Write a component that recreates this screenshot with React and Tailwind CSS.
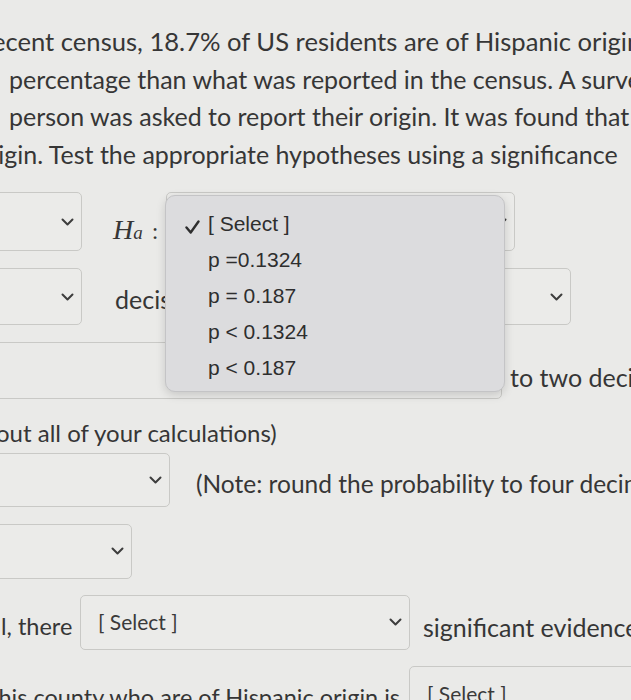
import React from 'react'

const Chevron = ({ className = '' }) => (
  <svg className={className} width="13" height="8" viewBox="0 0 13 8" fill="none">
    <path d="M1.5 1.5l5 5 5-5" stroke="#3d3d3d" strokeWidth="2" strokeLinecap="round" strokeLinejoin="round" />
  </svg>
)

const Box = ({ className = '', children, chevron = true }) => (
  <div className={`flex items-center border border-[#c9c9c6] rounded-[5px] bg-[#ebebe9] shrink-0 ${className}`}>
    <div className="flex-1 pl-[17px] text-[#3a3a3a] text-[21px]">{children}</div>
    {chevron && <Chevron className="mr-[7px]" />}
  </div>
)

const options = ['[ Select ]', 'p =0.1324', 'p = 0.187', 'p < 0.1324', 'p < 0.187']

export default function App() {
  return (
    <div className="relative w-[631px] h-[700px] overflow-hidden bg-[#eaeae8] text-[#363636] text-[25px] font-['Lato','Noto_Sans',sans-serif]">
      {/* question text */}
      <div className="pt-[23px] leading-[37.5px] whitespace-nowrap">
        <div className="ml-[-8px] text-[25.6px]">ecent census, 18.7% of US residents are of Hispanic origin</div>
        <div className="ml-[9px]">percentage than what was reported in the census. A survey</div>
        <div className="ml-[9px]">person was asked to report their origin. It was found that</div>
        <div className="ml-[-25px]">origin. Test the appropriate hypotheses using a significance</div>
      </div>

      {/* Ha row */}
      <div className="mt-[19px] h-[59px] flex items-center">
        <Box className="ml-[-40px] w-[122px] h-full" />
        <div className="ml-[31px] flex items-baseline mt-[16px] font-['Liberation_Serif',serif]">
          <span className="italic text-[28px]">H</span>
          <span className="italic text-[19px] mt-[9px]">a</span>
          <span className="ml-[9px] text-[24px]">:</span>
        </div>
        <Box className="ml-[8px] w-[349px] h-full" />
      </div>

      {/* decision row */}
      <div className="mt-[17px] h-[57px] flex items-center">
        <Box className="ml-[-40px] w-[122px] h-full" />
        <div className="ml-[33px] w-[152px] pt-[6px] whitespace-nowrap">decision rule</div>
        <Box className="ml-[0px] w-[304px] h-full" />
      </div>

      {/* input row */}
      <div className="mt-[17px] h-[57px] flex items-center whitespace-nowrap">
        <div className="ml-[-10px] w-[512px] h-full border border-[#c9c9c6] rounded-[5px] shrink-0" />
        <div className="ml-[8px] pt-[14px]">to two decimals</div>
      </div>

      <div className="mt-[15px] ml-[-4px] leading-[37.5px] whitespace-nowrap text-[24px]">out all of your calculations)</div>

      <div className="mt-[1px] h-[54px] flex items-center whitespace-nowrap">
        <Box className="ml-[-20px] w-[190px] h-full" />
        <div className="ml-[26px] pt-[10px] text-[24.5px]">(Note: round the probability to four decimals)</div>
      </div>

      <div className="mt-[17px] h-[55px] flex items-center">
        <Box className="ml-[-20px] w-[152px] h-full" />
      </div>

      <div className="mt-[16px] h-[55px] flex items-center whitespace-nowrap">
        <div className="w-[80px] shrink-0 pl-[1px] pt-[10px] text-[23.5px]">l, there</div>
        <Box className="w-[330px] h-full">[ Select ]</Box>
        <div className="ml-[13px] pt-[12px]">significant evidence</div>
      </div>

      <div className="mt-[16px] h-[55px] flex items-start whitespace-nowrap">
        <div className="w-[409px] shrink-0 flex justify-end pr-[9px] pt-[14px] overflow-hidden text-[23.5px]">
          <span>of this county who are of Hispanic origin is</span>
        </div>
        <div className="w-[260px] h-full border border-[#c9c9c6] rounded-[5px] shrink-0 pl-[17px] pt-[11px] text-[21px] text-[#3a3a3a]">[ Select ]</div>
      </div>

      {/* open dropdown menu */}
      <div className="absolute left-[165px] top-[195px] w-[340px] h-[197px] rounded-[10px] bg-[#dcdcde] border border-[#c4c4c6] shadow-[0_3px_10px_rgba(0,0,0,0.15)] pt-[10px] font-['Liberation_Sans',Arial,sans-serif] text-[21px] text-[#2e2e2e]">
        {options.map((o, i) => (
          <div key={o} className="h-[36px] flex items-center">
            <div className="w-[42px] shrink-0 flex justify-end pr-[8px] pt-[6px]">
              {i === 0 && (
                <svg width="15" height="14" viewBox="0 0 15 14" fill="none">
                  <path d="M1.5 7.5l4.2 5L13.5 1.5" stroke="#2e2e2e" strokeWidth="2.4" strokeLinecap="round" strokeLinejoin="round" />
                </svg>
              )}
            </div>
            <span>{o}</span>
          </div>
        ))}
      </div>
    </div>
  )
}
